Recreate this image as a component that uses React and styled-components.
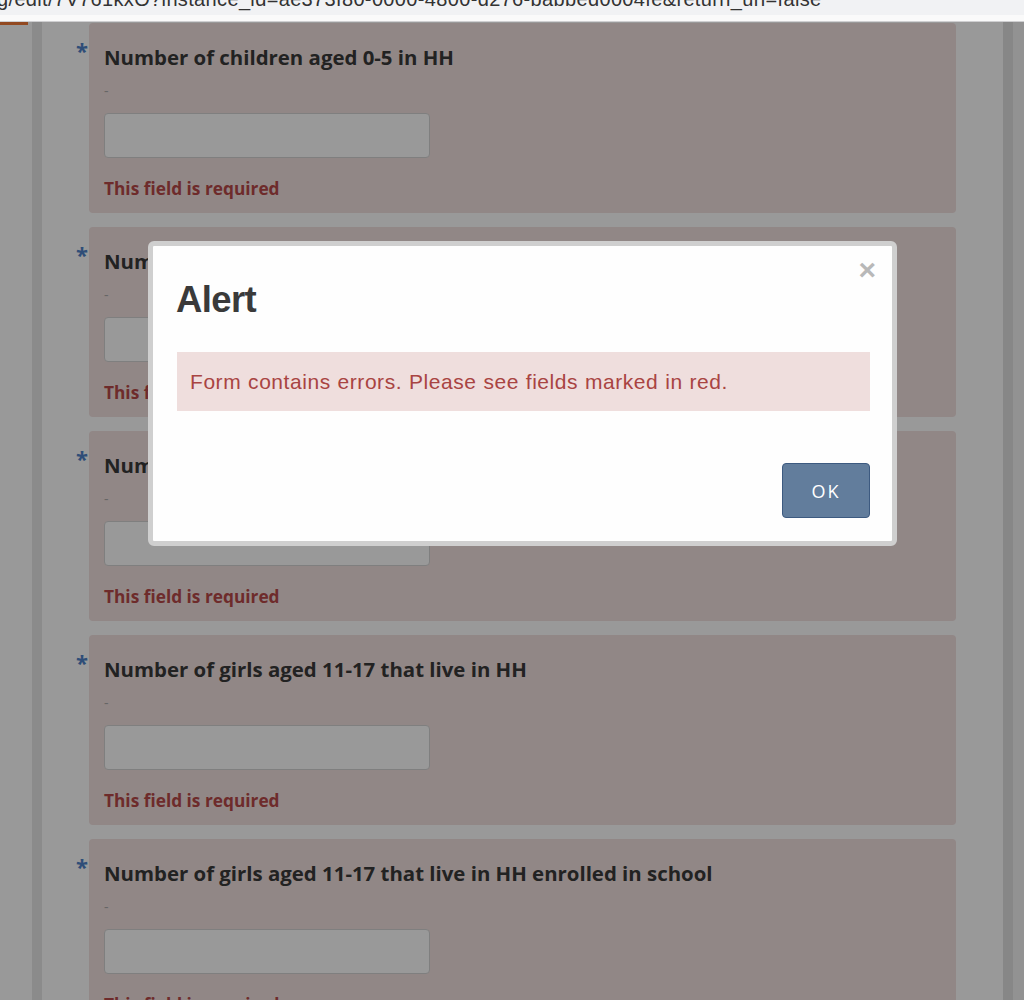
import styled, { createGlobalStyle } from 'styled-components';

const GlobalStyle = createGlobalStyle`
  html, body {
    margin: 0;
    padding: 0;
    background: #ffffff;
    font-family: "Open Sans", "Liberation Sans", sans-serif;
  }
`;

const Page = styled.div`
  width: 1024px;
  height: 1000px;
  overflow: hidden;
  display: flex;
  flex-direction: column;
`;

const UrlBar = styled.div`
  height: 15px;
  background-color: #f1f2f4;
  overflow: hidden;
  flex-shrink: 0;
`;

const UrlText = styled.div`
  margin-top: -11px;
  margin-left: -3px;
  font-family: "Liberation Sans", Arial, sans-serif;
  font-size: 20px;
  line-height: 20px;
  letter-spacing: 0.35px;
  color: #333;
  white-space: nowrap;
`;

const UrlDivider = styled.div`
  height: 6px;
  background-color: #fafafa;
  border-bottom: 1px solid #cfcfd1;
  flex-shrink: 0;
`;

const Viewport = styled.div`
  position: relative;
  flex: 1;
  display: flex;
  overflow: hidden;
  background-color: #ffffff;
`;

const Gutter = styled.div`
  width: 32px;
  flex-shrink: 0;
`;

const NavAccent = styled.div`
  width: 28px;
  height: 3px;
  background-color: #f47a38;
`;

const FormFrame = styled.div`
  width: 981px;
  flex-shrink: 0;
  box-sizing: border-box;
  border-left: 10px solid #e8e8e8;
  border-right: 10px solid #e1e1e1;
  padding: 1px 47px 0;
  display: flex;
  flex-direction: column;
  gap: 14px;
`;

const Side = styled.div`
  flex: 1;
  background-color: #f4f4f4;
`;

const Card = styled.div`
  position: relative;
  background-color: #f2e1df;
  border-radius: 4px;
  padding: 22px 15px 13px;
  flex-shrink: 0;
`;

const Star = styled.span`
  position: absolute;
  left: -13px;
  top: 16px;
  font-size: 22px;
  font-weight: 700;
  color: #4e82c8;
  line-height: 22px;
`;

const Label = styled.div`
  font-size: 20.4px;
  line-height: 24px;
  font-weight: 700;
  color: #393939;
`;

const Hint = styled.div`
  margin-top: 12px;
  font-size: 14px;
  line-height: 20px;
  color: #aaaaaa;
`;

const Input = styled.input`
  display: block;
  margin-top: 12px;
  width: 326px;
  height: 45px;
  box-sizing: border-box;
  background-color: #ffffff;
  border: 1px solid #d4d4d4;
  border-radius: 4px;
  padding: 0 10px;
  font-size: 16px;
`;

const ErrorText = styled.div`
  margin-top: 20px;
  font-size: 17.3px;
  line-height: 22px;
  font-weight: 700;
  color: #b74949;
`;

const Backdrop = styled.div`
  position: absolute;
  inset: 0;
  background-color: rgba(0, 0, 0, 0.4);
`;

const Modal = styled.div`
  position: absolute;
  left: 148px;
  top: 219px;
  width: 749px;
  height: 305px;
  box-sizing: border-box;
  border: 5px solid #cfcfcf;
  border-radius: 6px;
  background-color: #fefefe;
  padding: 34px 22px 23px 23px;
  display: flex;
  flex-direction: column;
  font-family: "Liberation Sans", Arial, sans-serif;
`;

const Close = styled.button`
  position: absolute;
  top: 11px;
  right: 16px;
  border: none;
  background: none;
  padding: 0;
  font-family: "Liberation Sans", Arial, sans-serif;
  font-size: 30px;
  line-height: 26px;
  font-weight: 700;
  color: #b8b8b8;
  cursor: pointer;
`;

const ModalTitle = styled.h2`
  margin: 0;
  font-size: 36.5px;
  line-height: 40px;
  font-weight: 700;
  color: #3a3a3a;
  letter-spacing: -0.6px;
`;

const AlertBox = styled.div`
  margin-top: 32px;
  margin-left: 1px;
  height: 59px;
  display: flex;
  align-items: center;
  padding-left: 13px;
  background-color: #efdedd;
  color: #a94442;
  font-size: 21px;
  letter-spacing: 0.55px;
  word-spacing: 0.5px;
`;

const Footer = styled.div`
  margin-top: 52px;
  display: flex;
  justify-content: flex-end;
`;

const OkButton = styled.button`
  width: 88px;
  height: 55px;
  background-color: #627d9c;
  border: 1px solid #3d5a80;
  border-radius: 4px;
  color: #ffffff;
  font-family: "Open Sans", "Liberation Sans", sans-serif;
  font-size: 18px;
  letter-spacing: 2px;
  cursor: pointer;
`;

const questions = [
  'Number of children aged 0-5 in HH',
  'Number of children aged 6-10 in HH',
  'Number of children aged 6-10 enrolled in school',
  'Number of girls aged 11-17 that live in HH',
  'Number of girls aged 11-17 that live in HH enrolled in school',
];

const App = () => {
  return (
    <Page>
      <GlobalStyle />
      <UrlBar>
        <UrlText>g/edit/7V761kxO?instance_id=ae373f80-0000-4800-d276-babbed0004fe&amp;return_url=false</UrlText>
      </UrlBar>
      <UrlDivider />
      <Viewport>
        <Gutter>
          <NavAccent />
        </Gutter>
        <FormFrame>
          {questions.map((q) => (
            <Card key={q}>
              <Star>*</Star>
              <Label>{q}</Label>
              <Hint>-</Hint>
              <Input type="number" />
              <ErrorText>This field is required</ErrorText>
            </Card>
          ))}
        </FormFrame>
        <Side />
        <Backdrop />
        <Modal>
          <Close>×</Close>
          <ModalTitle>Alert</ModalTitle>
          <AlertBox>Form contains errors. Please see fields marked in red.</AlertBox>
          <Footer>
            <OkButton>OK</OkButton>
          </Footer>
        </Modal>
      </Viewport>
    </Page>
  );
};

export default App;
